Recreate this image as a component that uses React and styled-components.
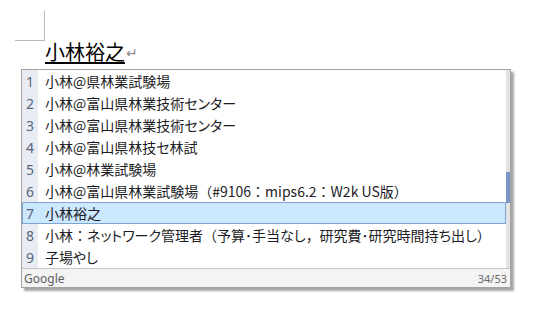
import React from "react";
import styled, { createGlobalStyle } from "styled-components";

const items = [
  "小林@県林業試験場",
  "小林@富山県林業技術センター",
  "小林@富山県林業技術センター",
  "小林@富山県林技セ林試",
  "小林@林業試験場",
  "小林@富山県林業試験場（#9106：mips6.2：W2k US版）",
  "小林裕之",
  "小林：ネットワーク管理者（予算･手当なし，研究費･研究時間持ち出し）",
  "子場やし",
];

const SELECTED = 6;

// kana runs get proportional widths, like the UI font of the original
const splitKana = (text) =>
  text.split(/([\u3041-\u30ff]+)/).map((part, i) =>
    /^[\u3041-\u30ff]+$/.test(part) ? <Kana key={i}>{part}</Kana> : part
  );

const App = () => {
  return (
    <>
      <GlobalStyle />
      <Page>
        <CornerMark />
        <TitleLine>
          <Title>小林裕之</Title>
          <ReturnMark>↵</ReturnMark>
        </TitleLine>
        <Popup>
          <ListArea>
            <Rows>
              {items.map((text, i) => (
                <Row key={i} selected={i === SELECTED}>
                  <Num selected={i === SELECTED}>{i + 1}</Num>
                  <Label>{splitKana(text)}</Label>
                </Row>
              ))}
            </Rows>
            <ScrollTrack>
              <ScrollThumb />
            </ScrollTrack>
          </ListArea>
          <Footer>
            <Brand>Google</Brand>
            <Count>34/53</Count>
          </Footer>
        </Popup>
      </Page>
    </>
  );
};

export default App;

const GlobalStyle = createGlobalStyle`
    body{
        margin: 0;
        background: #ffffff;
        font-family: "Noto Sans CJK JP", "Noto Sans", sans-serif;
    }
`;

const Page = styled.div`
    width: 556px;
    height: 332px;
    box-sizing: border-box;
    padding: 10px 0 0 15px;
`;

const CornerMark = styled.div`
    width: 29px;
    height: 30px;
    border-right: 1px solid #b9b9b9;
    border-bottom: 1px solid #b9b9b9;
`;

const TitleLine = styled.div`
    display: flex;
    align-items: flex-end;
    margin-left: 30px;
    height: 23px;
`;

const Title = styled.span`
    font-size: 20px;
    line-height: 21px;
    color: #000;
    border-bottom: 2px solid #000;
`;

const ReturnMark = styled.span`
    font-family: "DejaVu Sans", sans-serif;
    font-size: 14px;
    line-height: 16px;
    color: #8a8a8a;
    margin-left: 1px;
    margin-bottom: 3px;
`;

const Popup = styled.div`
    margin: 5px 0 0 6px;
    width: 490px;
    box-sizing: border-box;
    border: 1px solid #a3a3a3;
    background: #fff;
    box-shadow: 3px 3px 2px rgba(0, 0, 0, 0.35);
`;

const ListArea = styled.div`
    display: flex;
`;

const Rows = styled.div`
    flex: 1;
    min-width: 0;
    display: flex;
    flex-direction: column;
`;

const Row = styled.div`
    display: flex;
    align-items: center;
    height: 22px;
    background: ${props => props.selected ? '#cce8ff' : 'transparent'};
    box-shadow: ${props => props.selected ? 'inset 0 0 0 1px #7ea4d4' : 'none'};
`;

const Num = styled.div`
    flex-shrink: 0;
    width: 16px;
    height: 100%;
    display: flex;
    align-items: center;
    justify-content: center;
    background: ${props => props.selected ? 'transparent' : '#e9edf3'};
    color: #56657d;
    font-family: "Noto Sans", sans-serif;
    font-size: 14px;
`;

const Label = styled.div`
    padding-left: 7px;
    font-size: 14px;
    color: #1c1c24;
    white-space: nowrap;
`;

const Kana = styled.span`
    font-feature-settings: "palt";
`;

const ScrollTrack = styled.div`
    flex-shrink: 0;
    width: 4px;
    background: #e3e3e3;
    display: flex;
    flex-direction: column;
`;

const ScrollThumb = styled.div`
    margin-top: 102px;
    height: 31px;
    background: #7b96c6;
`;

const Footer = styled.div`
    display: flex;
    justify-content: space-between;
    align-items: center;
    height: 18px;
    border-top: 1px solid #c4c4c4;
    background: #f4f4f4;
    padding: 0 3px 0 2px;
`;

const Brand = styled.span`
    font-family: "Noto Sans", sans-serif;
    font-size: 12px;
    color: #5e5e5e;
`;

const Count = styled.span`
    font-family: "Noto Sans", sans-serif;
    font-size: 11px;
    color: #6a6a6a;
`;
